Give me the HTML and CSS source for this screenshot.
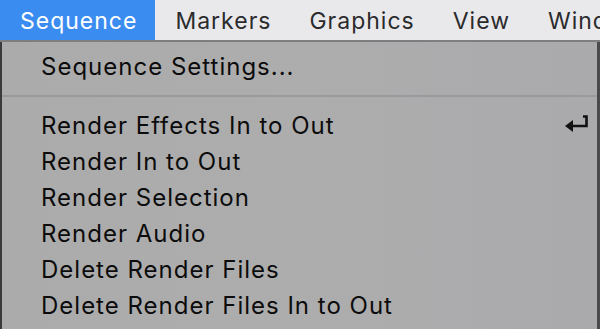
FILE: index.html
```html
<!DOCTYPE html>
<html lang="en">

<head>
    <meta charset="UTF-8">
    <title>Sequence Menu</title>
    <link rel="stylesheet" href="styles.css">
</head>

<body>
    <!-- Top menu bar -->
    <div class="menubar">
        <span class="menu-title active">Sequence</span>
        <span class="menu-title">Markers</span>
        <span class="menu-title">Graphics</span>
        <span class="menu-title">View</span>
        <span class="menu-title">Window</span>
    </div>

    <!-- Dropdown -->
    <div class="dropdown">
        <div class="item first">Sequence Settings...</div>
        <div class="separator"></div>
        <div class="item">
            <span>Render Effects In to Out</span>
            <svg class="shortcut" width="26" height="18" viewBox="0 0 26 18">
                <path d="M19 1.5 H22.5 V11 H8" fill="none" stroke="#111" stroke-width="2.6" />
                <path d="M1 11 L9 5 V17 Z" fill="#111" />
            </svg>
        </div>
        <div class="item">Render In to Out</div>
        <div class="item">Render Selection</div>
        <div class="item">Render Audio</div>
        <div class="item">Delete Render Files</div>
        <div class="item">Delete Render Files In to Out</div>
    </div>
</body>

</html>
```

FILE: styles.css
```css
* {
    margin: 0;
    padding: 0;
    box-sizing: border-box;
}

body {
    width: 600px;
    height: 329px;
    overflow: hidden;
    font-family: Inter, "Liberation Sans", sans-serif;
    background-color: #a9a8aa;
}

/* Menu bar */
.menubar {
    height: 42px;
    display: flex;
    background-color: #e9e9ec;
    border-bottom: 2px solid #7e7d80;
    white-space: nowrap;
}

.menu-title {
    font-size: 23px;
    letter-spacing: 1px;
    color: #2b2b2d;
    padding: 0 18px 0 20px;
    line-height: 42px;
}

.menu-title.active {
    background-color: #3b8cf0;
    color: white;
}

/* Dropdown panel */
.dropdown {
    height: 287px;
    background: linear-gradient(90deg, #ababab, #aeadae 50%, #aaa9ab);
    border-left: 2px solid #3a3a3c;
    border-right: 3px solid #4a4a4c;
    padding-top: 6px;
}

.item {
    display: flex;
    justify-content: space-between;
    align-items: center;
    height: 36px;
    padding: 0 7px 0 39px;
    font-size: 24px;
    letter-spacing: 1px;
    color: #0c0c0c;
}

.separator {
    height: 2px;
    background-color: #9a999b;
    margin: 11px 0 10px;
}

.shortcut {
    margin-bottom: 3px;
}
```
